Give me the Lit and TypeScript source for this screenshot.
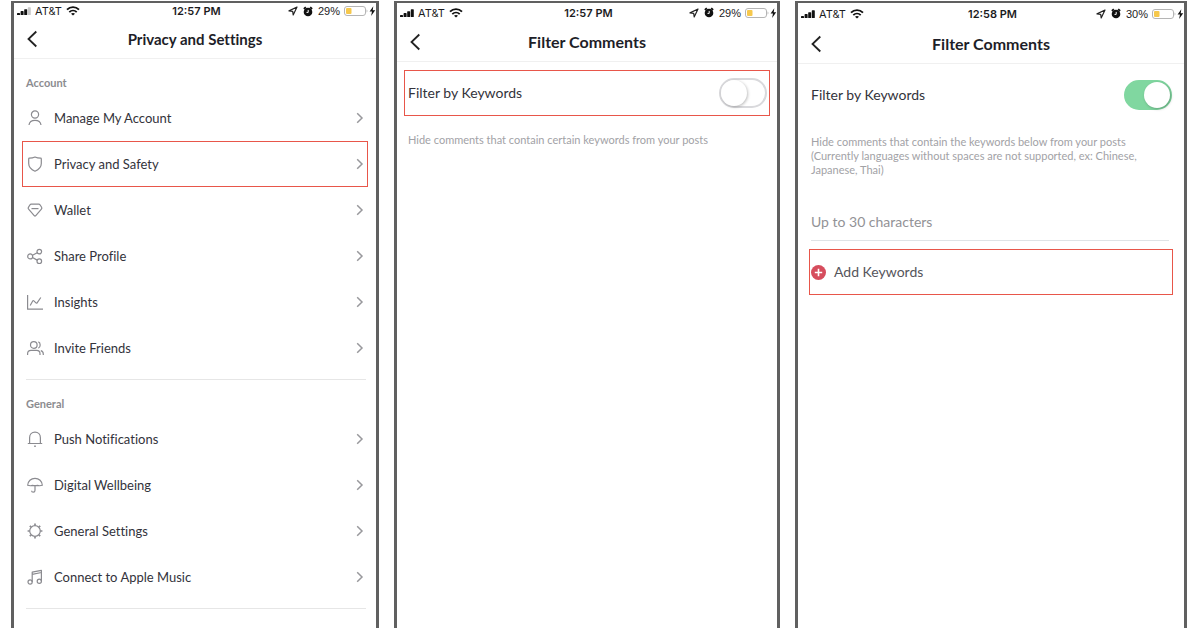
import { LitElement, html, css, svg } from "lit";
import { customElement, property } from "lit/decorators.js";
import { classMap } from "lit/directives/class-map.js";

const icons: Record<string, unknown> = {
  user: svg`<circle cx="9" cy="5.5" r="3.6"/><path d="M3 16c.4-3.200 2.800-4.700 6-4.700s5.600 1.500 6 4.700"/>`,
  shield: svg`<path d="M9 2c1.800.9 3.700 1.200 5.600 1.200.4 0 .7.300.7.700v4.600c0 3.500-2.400 6-6.300 7.700-3.900-1.700-6.300-4.200-6.300-7.700V3.900c0-.4.300-.7.700-.7C5.300 3.200 7.200 2.900 9 2z"/>`,
  gem: svg`<path d="M5.200 3.200h7.600c.5 0 .9.200 1.200.6l1.600 2.500c.4.600.3 1.300-.2 1.800L9.800 14.600c-.5.500-1.100.5-1.600 0L2.600 8.100c-.5-.5-.6-1.200-.2-1.800L4 3.800c.3-.4.700-.6 1.200-.6z"/><path d="M5.500 7.600h7"/>`,
  share: svg`<circle cx="4.200" cy="9.400" r="2.500"/><circle cx="13.300" cy="4.600" r="2.300"/><circle cx="13.300" cy="14.200" r="2.300"/><path d="M6.500 8.300l4.700-2.600M6.500 10.500l4.700 2.600"/>`,
  chart: svg`<path d="M1.600 2v14.200h15.400"/><path d="M4.200 12.500l2.500-4.500c.3-.5.800-.5 1.200-.1l2 2c.4.400.9.300 1.200-.1l3.700-5.300"/>`,
  friends: svg`<circle cx="7.800" cy="6" r="3.300"/><path d="M1.600 16v-1.200c0-2.100 1.500-3.400 3.400-3.400h5.600c1.900 0 3.400 1.300 3.400 3.400V16M12.300 2.900c2.500.6 2.500 5.600 0 6.200M14.800 11.600c1.700.5 2.500 1.700 2.500 3.400v1"/>`,
  bell: svg`<path d="M1.800 13.500h14.400M3.600 13.500V7.700C3.600 4.600 5.800 2.200 9 2.200s5.400 2.400 5.400 5.500v5.800"/><path d="M8.200 16.300h1.600" stroke-width="1.600"/>`,
  umbrella: svg`<path d="M1.700 9.300C1.900 5.200 5 2.400 9 2.400s7.100 2.800 7.300 6.900c-1.200.4-3.500.5-4.900.1-1.600.4-3.200.4-4.800 0-1.400.4-3.700.3-4.900-.1zM9 9.800v4.400c0 1.300-.7 2-1.700 2s-1.700-.6-1.700-1.500"/>`,
  gear: svg`<circle cx="9" cy="9" r="5.300"/><path d="M9 1.600v2M9 14.400v2M1.600 9h2M14.400 9h2M3.800 3.800l1.400 1.400M12.800 12.800l1.400 1.400M3.800 14.200l1.400-1.400M12.800 5.200l1.400-1.400" stroke-width="1.700"/>`,
  music: svg`<path d="M6.200 13.900V4.200l9.200-1.900v11M6.200 6.300l9.200-1.800"/><circle cx="4.100" cy="14" r="2.100"/><circle cx="13.300" cy="13.300" r="2.100"/>`,
};

@customElement("status-bar")
class StatusBar extends LitElement {
  @property() time = "";
  @property() level = "";
  @property({ type: Number }) bars = 4;

  static styles = css`
    :host {
      display: grid;
      grid-template-columns: 1fr auto 1fr;
      align-items: center;
      height: var(--status-height);
      padding-left: 3px;
      font: 11px/16px Inter, "Liberation Sans", sans-serif;
      color: #1c1c1e;
    }
    svg { display: block; flex: none; }
    .side { display: flex; align-items: center; gap: 4px; }
    .end { justify-content: flex-end; }
    .time { font-weight: 600; }
    .level { font-family: "Liberation Sans", sans-serif; }
  `;

  render() {
    return html`
      <div class="side">
        <svg width="14" height="8" viewBox="0 0 14 8" aria-hidden="true">
          ${[0, 1, 2, 3].map(
            (i) => svg`<rect x=${i * 3.6} y=${6 - i * 1.9} width="3" height=${2 + i * 1.9} rx=".6" fill=${i < this.bars ? "#111" : "#c9c9c9"}/>`
          )}
        </svg>
        <span>AT&amp;T</span>
        <svg width="14" height="10" viewBox="0 0 14 10" fill="none" stroke="#111" stroke-width="1.900" aria-hidden="true">
          <path d="M1 3.700C4.400.3 9.600.3 13 3.700M3.300 6.100c2.100-2 5.300-2 7.400 0"/>
          <path d="M7 9.600L5 7.700c1.100-1 2.900-1 4 0z" fill="#111" stroke="none"/>
        </svg>
      </div>
      <span class="time">${this.time}</span>
      <div class="side end">
        <svg width="10" height="10" viewBox="0 0 10 10" fill="none" stroke="#222" stroke-width="1.200" stroke-linejoin="round" aria-hidden="true">
          <path d="M9 1L1 4.900l3.700.4.500 3.700z"/>
        </svg>
        <svg width="12" height="11" viewBox="0 0 12 11" aria-hidden="true">
          <circle cx="6" cy="6" r="4.300" fill="#111"/>
          <path d="M1.900 3L3.800 1.200M10.100 3L8.200 1.200" stroke="#111" stroke-width="1.800"/>
          <path d="M6.200 3.900v2.500H4.500" fill="none" stroke="#fff"/>
        </svg>
        <span class="level">${this.level}</span>
        <svg width="32" height="12" viewBox="0 0 32 12" aria-hidden="true">
          <rect x=".5" y="1.500" width="21" height="9" rx="2.500" fill="#fff" stroke="#b5b5b5"/>
          <rect x="2" y="3" width="5.500" height="6" rx="1" fill="#f6c84c"/>
          <path d="M22.600 4.500c1 .5 1 2.500 0 3z" fill="#aaa"/>
          <path d="M29.300 1.300l-3.700 5.200h2.400l-.9 4.400 4.100-5.600h-2.500z" fill="#111"/>
        </svg>
      </div>
    `;
  }
}

@customElement("app-root")
class AppRoot extends LitElement {
  static styles = css`
    :host {
      display: grid;
      grid-template-columns: 368fr 386fr 392fr;
      gap: 15px;
      box-sizing: border-box;
      min-height: 100vh;
      padding: 1px 13px 0 11px;
      background: #fff;
      color: #33333b;
      font: 13px/16px Lato, "Open Sans", sans-serif;
      font-variant-ligatures: none;
    }
    * { box-sizing: border-box; }
    svg { display: block; flex: none; }
    .phone {
      --status-height: 16px;
      --title: 15px;
      min-width: 0;
      border: 2px solid #606060;
      border-width: 2px 3px 0;
    }
    .first { --pad: 3px; }
    .second { --status-height: 19px; --title: 16px; --inset: 7px; --pad: 3px; }
    .third { --status-height: 21px; --title: 16px; --inset: 11px; --pad: 1px; }
    header {
      display: grid;
      grid-template-columns: 36px 1fr 36px;
      align-items: center;
      height: 40px;
      border-bottom: 1px solid #f0f0f0;
    }
    h1 {
      margin: 0;
      font-size: var(--title);
      line-height: 20px;
      font-weight: 700;
      text-align: center;
      color: #1e1e28;
    }
    button {
      border: 0;
      padding: 0;
      background: none;
      color: inherit;
      font: inherit;
      text-align: left;
      cursor: pointer;
    }
    .back { padding-left: 12px; }
    h2 {
      margin: 0;
      padding: 16px 4px 4px;
      font-size: 11px;
      line-height: 16px;
      font-weight: 700;
      color: #8c8c90;
    }
    .group { margin: 0 8px; }
    ul {
      margin: 0;
      padding: 0 0 8px;
      list-style: none;
    }
    .rule { margin: 0 2px 0 4px; border-bottom: 1px solid #e6e6e6; }
    .row {
      display: flex;
      align-items: center;
      width: 100%;
      height: 46px;
      padding: 0 var(--pad);
      border: 1px solid transparent;
      color: inherit;
      text-decoration: none;
    }
    .row.marked { border-color: #e8564a; }
    .row .text { flex: 1; }
    .link .text { padding-left: 10px; }
    .body { padding: 8px var(--inset) 0; font-size: 14px; }
    .option { padding-right: calc(var(--pad) - 1px); }
    .note {
      margin: 0;
      padding: 17px calc(var(--pad) + 1px) 0;
      font-size: 11px;
      line-height: 14px;
      color: #a2a2a6;
    }
    .switch {
      appearance: none;
      display: flex;
      width: 48px;
      height: 30px;
      margin: 0;
      border: 2px solid #d9d9dc;
      border-radius: 15px;
      background: #fff;
      cursor: pointer;
    }
    .switch::before {
      content: "";
      width: 26px;
      height: 26px;
      border-radius: 50%;
      background: #fff;
      box-shadow: 1px 1px 3px #00000040;
    }
    .switch:checked {
      justify-content: flex-end;
      border-color: #80d7a0;
      background: #80d7a0;
    }
    .keyword {
      display: block;
      width: calc(100% - 6px);
      height: 39px;
      margin: 25px 4px 8px 2px;
      padding: 0;
      border: 0;
      border-bottom: 1px solid #dfe3e6;
      border-radius: 0;
      outline: 0;
      background: none;
      font: inherit;
    }
    .keyword::placeholder { color: #929296; opacity: 1; }
    .add .text { padding-left: 8px; color: #55555b; }
  `;

  private header(title: string) {
    return html`<header>
      <button class="back" aria-label="Back">
        <svg width="12" height="18" viewBox="0 0 12 18" fill="none" stroke="#222" stroke-width="1.800"><path d="M10.300 1.500L2.500 9l7.800 7.500"/></svg>
      </button>
      <h1>${title}</h1>
    </header>`;
  }

  private group(name: string, items: [string, string][], marked?: string) {
    return html`<section class="group">
      <h2>${name}</h2>
      <ul>
        ${items.map(
          ([icon, text]) => html`<li>
            <a href="#" class=${classMap({ row: true, link: true, marked: text === marked })}>
              <svg width="18" height="18" viewBox="0 0 18 18" fill="none" stroke="#8b8b90" stroke-width="1.200" stroke-linejoin="round" aria-hidden="true">${icons[icon]}</svg>
              <span class="text">${text}</span>
              <svg width="8" height="12" viewBox="0 0 8 12" fill="none" stroke="#98989c" stroke-width="1.500" aria-hidden="true"><path d="M1.200 1.300L6 6l-4.800 4.700"/></svg>
            </a>
          </li>`
        )}
      </ul>
      <div class="rule"></div>
    </section>`;
  }

  private filter(on: boolean, marked: boolean) {
    return html`<label class=${classMap({ row: true, option: true, marked })}>
      <span class="text">Filter by Keywords</span>
      <input class="switch" type="checkbox" role="switch" .checked=${on} />
    </label>`;
  }

  render() {
    return html`
      <section class="phone first">
        <status-bar time="12:57 PM" level="29%" bars="3"></status-bar>
        ${this.header("Privacy and Settings")}
        ${this.group(
          "Account",
          [
            ["user", "Manage My Account"],
            ["shield", "Privacy and Safety"],
            ["gem", "Wallet"],
            ["share", "Share Profile"],
            ["chart", "Insights"],
            ["friends", "Invite Friends"],
          ],
          "Privacy and Safety"
        )}
        ${this.group("General", [
          ["bell", "Push Notifications"],
          ["umbrella", "Digital Wellbeing"],
          ["gear", "General Settings"],
          ["music", "Connect to Apple Music"],
        ])}
      </section>
      <section class="phone second">
        <status-bar time="12:57 PM" level="29%"></status-bar>
        ${this.header("Filter Comments")}
        <div class="body">
          ${this.filter(false, true)}
          <p class="note">Hide comments that contain certain keywords from your posts</p>
        </div>
      </section>
      <section class="phone third">
        <status-bar time="12:58 PM" level="30%"></status-bar>
        ${this.header("Filter Comments")}
        <div class="body">
          ${this.filter(true, false)}
          <p class="note">
            Hide comments that contain the keywords below from your posts (Currently languages without spaces are not
            supported, ex: Chinese, Japanese, Thai)
          </p>
          <input class="keyword" type="text" maxlength="30" aria-label="Keyword" placeholder="Up to 30 characters" />
          <button class="row add marked">
            <svg width="15" height="15" viewBox="0 0 15 15" aria-hidden="true">
              <circle cx="7.500" cy="7.500" r="7.500" fill="#d64d5d"/>
              <path d="M7.500 3.800v7.400M3.800 7.500h7.400" stroke="#fff" stroke-width="1.600"/>
            </svg>
            <span class="text">Add Keywords</span>
          </button>
        </div>
      </section>
    `;
  }
}
